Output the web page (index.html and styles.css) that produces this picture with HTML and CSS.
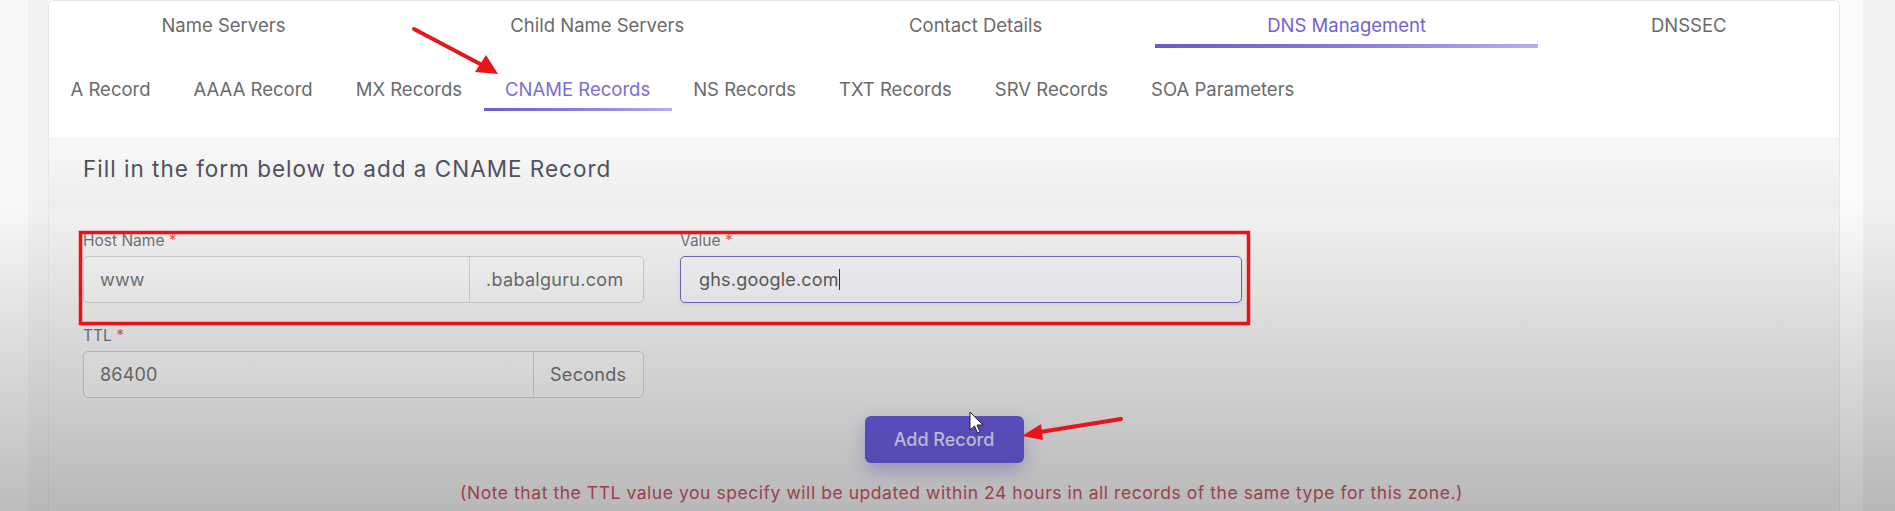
FILE: index.html
```html
<!DOCTYPE html>
<html lang="en">
<head>
  <meta charset="UTF-8">
  <meta name="viewport" content="width=device-width, initial-scale=1.0">
  <title>DNS Management - CNAME Records</title>
  <link rel="stylesheet" href="styles.css">
</head>
<body>
  <div class="page">
    <div class="gutter gutter-outer"></div>
    <div class="gutter gutter-inner"></div>

    <main class="card">
      <nav class="main-tabs">
        <a href="#">Name Servers</a>
        <a href="#">Child Name Servers</a>
        <a href="#">Contact Details</a>
        <a href="#" class="active">DNS Management</a>
        <a href="#">DNSSEC</a>
      </nav>

      <nav class="sub-tabs">
        <a href="#">A Record</a>
        <a href="#">AAAA Record</a>
        <a href="#">MX Records</a>
        <a href="#" class="active">CNAME Records</a>
        <a href="#">NS Records</a>
        <a href="#">TXT Records</a>
        <a href="#">SRV Records</a>
        <a href="#">SOA Parameters</a>
      </nav>

      <section class="form-panel">
        <div class="panel-head">
          <h2>Fill in the form below to add a CNAME Record</h2>
        </div>

        <form class="panel-body">
          <div class="field-row">
            <div class="field">
              <label>Host Name <span class="req">*</span></label>
              <div class="input-group">
                <span class="input">www</span>
                <span class="addon addon-domain">.babalguru.com</span>
              </div>
            </div>
            <div class="field">
              <label>Value <span class="req">*</span></label>
              <div class="input-group focused">
                <span class="input">ghs.google.com<span class="caret"></span></span>
              </div>
            </div>
          </div>

          <div class="field-row field-row-ttl">
            <div class="field">
              <label>TTL <span class="req">*</span></label>
              <div class="input-group">
                <span class="input">86400</span>
                <span class="addon addon-unit">Seconds</span>
              </div>
            </div>
          </div>

          <div class="actions">
            <button type="button">Add Record</button>
          </div>

          <p class="note">(Note that the TTL value you specify will be updated within 24 hours in all records of the same type for this zone.)</p>
        </form>
      </section>
    </main>

    <div class="scroll-edge"></div>
    <div class="scroll-track"></div>
  </div>

  <div class="vignette"></div>

  <!-- screen annotations drawn on top of the page -->
  <svg class="annotations" width="1895" height="511" viewBox="0 0 1895 511">
    <rect x="80.5" y="232.5" width="1168" height="91" fill="none" stroke="#ee1111" stroke-width="3.5"/>
    <line x1="414" y1="29" x2="482" y2="65" stroke="#e8151b" stroke-width="4" stroke-linecap="round"/>
    <polygon points="498,74 475,72 486,55" fill="#e8151b"/>
    <line x1="1121" y1="419" x2="1040" y2="432" stroke="#e8151b" stroke-width="4" stroke-linecap="round"/>
    <polygon points="1022,436 1041,424 1043,440" fill="#e8151b"/>
    <path d="M970 412 L970 430 L974.5 426 L977.5 433 L980 432 L977 425 L983 425 Z" fill="#fff" stroke="#222" stroke-width="1"/>
  </svg>
</body>
</html>
```

FILE: styles.css
```css
* {
  margin: 0;
  padding: 0;
  box-sizing: border-box;
}
body {
  font-family: "Inter", "Open Sans", sans-serif;
  background: #f7f7f7;
  width: 1895px;
  height: 511px;
  overflow: hidden;
  position: relative;
}
.page {
  display: flex;
  height: 511px;
}
.gutter-outer {
  width: 28px;
  background: #f8f8f8;
}
.gutter-inner {
  width: 20px;
  background: #f1f1f1;
}
.scroll-edge {
  width: 23px;
  background: #fbfbfb;
}
.scroll-track {
  flex: 1;
  background: #f1f1f1;
}
.card {
  width: 1792px;
  background: #fff;
  border: 1px solid #e6e6e6;
  border-bottom: none;
  border-radius: 6px 6px 0 0;
  display: flex;
  flex-direction: column;
}

/* top level tabs */
.main-tabs {
  display: flex;
}
.main-tabs a {
  flex: 1 1 auto;
  position: relative;
  text-align: center;
  padding-top: 11px;
  height: 47px;
  line-height: 26px;
  font-size: 18.5px;
  color: #6a6a6a;
  text-decoration: none;
}
.main-tabs a.active {
  color: #7263d3;
}
.main-tabs a.active::after {
  content: "";
  position: absolute;
  left: 0;
  right: 0;
  bottom: 0;
  height: 4px;
  background: linear-gradient(90deg, #6a59cf, #8c7de0 55%, #b9adee);
}

/* record tabs */
.sub-tabs {
  display: flex;
  margin-top: 17px;
  margin-bottom: 26px;
}
.sub-tabs a {
  position: relative;
  padding: 11px 21.5px 9px;
  line-height: 26px;
  font-size: 18.5px;
  color: #6a6a6a;
  text-decoration: none;
}
.sub-tabs a.active {
  color: #7a6dd6;
}
.sub-tabs a.active::after {
  content: "";
  position: absolute;
  left: 0;
  right: 0;
  bottom: 0;
  height: 3px;
  background: linear-gradient(90deg, #6c5dd0, #9385e2 60%, #b8aced);
}

/* form panel */
.form-panel {
  flex: 1;
  background: #f2f2f2;
}
.panel-head {
  height: 72px;
  padding: 17px 34px 0;
  background: linear-gradient(#f8f8f8, #ededed);
}
.panel-head h2 {
  font-size: 22.5px;
  font-weight: 400;
  letter-spacing: 1px;
  line-height: 30px;
  color: #50505e;
}
.panel-body {
  padding-top: 23px;
}
.field-row {
  display: grid;
  grid-template-columns: 561px 562px;
  gap: 36px;
  padding-left: 34px;
}
.field-row-ttl {
  margin-top: 24px;
}
.field label {
  display: block;
  font-size: 15.5px;
  line-height: 18px;
  color: #727272;
  margin-bottom: 6px;
}
.req {
  color: #e05b5b;
}
.input-group {
  display: flex;
  height: 47px;
  border: 1px solid #cfcfcf;
  border-radius: 5px;
  background: #f6f6f6;
  overflow: hidden;
}
.input-group.focused {
  border-color: #6f68bc;
  background: #f4f4f8;
  box-shadow: 0 1px 4px rgba(111, 104, 188, 0.15);
}
.input {
  flex: 1;
  display: flex;
  align-items: center;
  padding-left: 16px;
  font-size: 18px;
  letter-spacing: 0.2px;
  color: #727272;
}
.focused .input {
  padding-left: 18px;
  color: #5c5c5c;
}
.caret {
  display: inline-block;
  width: 1.5px;
  height: 21px;
  background: #333;
}
.addon {
  display: flex;
  align-items: center;
  padding-left: 16px;
  border-left: 1px solid #d4d4d4;
  font-size: 18px;
  letter-spacing: 0.3px;
  color: #6e6e6e;
}
.addon-domain {
  width: 174px;
}
.addon-unit {
  width: 110px;
}
.actions {
  display: flex;
  justify-content: center;
  margin-top: 18px;
}
.actions button {
  width: 159px;
  height: 47px;
  border: none;
  border-radius: 6px;
  background: #685ce0;
  color: #e4e1fb;
  font-family: inherit;
  font-size: 18px;
  font-weight: 500;
  box-shadow: 0 8px 18px rgba(95, 82, 210, 0.35);
  cursor: pointer;
}
.note {
  margin-top: 18px;
  padding-left: 35px;
  text-align: center;
  font-size: 17.5px;
  letter-spacing: 0.55px;
  line-height: 24px;
  color: #c65465;
}

/* darkening from the screen recording */
.vignette {
  position: absolute;
  inset: 0;
  pointer-events: none;
  background: linear-gradient(to bottom, rgba(0, 0, 0, 0) 40%, rgba(0, 0, 0, 0.1) 65%, rgba(0, 0, 0, 0.24) 100%);
}
.annotations {
  position: absolute;
  left: 0;
  top: 0;
  pointer-events: none;
}
```
